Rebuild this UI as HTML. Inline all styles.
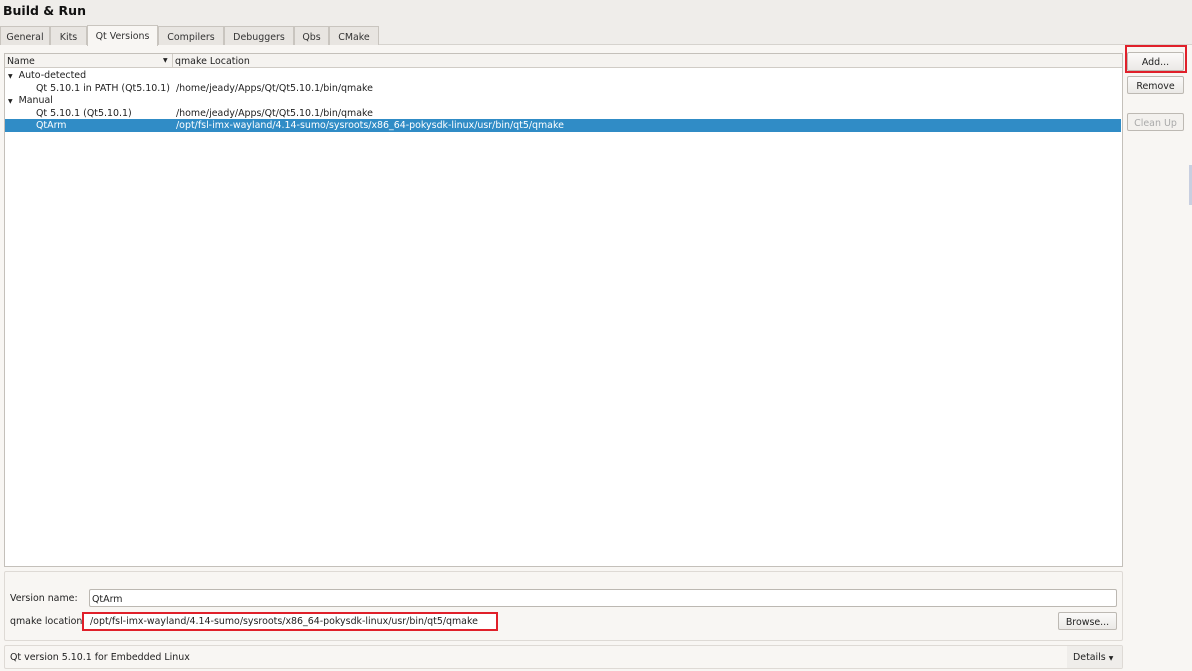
<!DOCTYPE html>
<html><head><style>
*{box-sizing:border-box;margin:0;padding:0}
body{width:1192px;height:671px;background:#f8f6f3;font-family:"DejaVu Sans","Liberation Sans",sans-serif;font-size:9.45px;color:#222;position:relative;overflow:hidden}
.a{position:absolute;white-space:nowrap}
.top{left:0;top:0;width:1192px;height:45px;background:#efedea;border-bottom:1px solid #d6d3ce}
.tab{top:26px;height:19px;border:1px solid #c9c5bf;border-bottom:none;background:#e8e5e1;padding:5px 0 0;text-align:center;color:#333}
.btn{border:1px solid #bdb9b3;border-radius:2px;background:linear-gradient(#fbfaf9,#ebe9e6);text-align:center;color:#222;padding-top:4px}
.row{left:5px;width:1116px;height:12.5px;line-height:13.5px}
.red{border:2px solid #e0202a}
</style></head><body>
<div class="a top"></div>
<div class="a" style="left:3px;top:3px;font-weight:bold;font-size:12.5px;color:#111">Build &amp; Run</div>
<div class="a tab" style="left:0;width:50px">General</div>
<div class="a tab" style="left:50px;width:37px">Kits</div>
<div class="a tab" style="left:87px;width:71px;top:25px;height:21px;background:#f8f6f3;padding-top:5px">Qt Versions</div>
<div class="a tab" style="left:158px;width:66px">Compilers</div>
<div class="a tab" style="left:224px;width:70px">Debuggers</div>
<div class="a tab" style="left:294px;width:35px">Qbs</div>
<div class="a tab" style="left:329px;width:50px">CMake</div>

<div class="a" style="left:4px;top:53px;width:1119px;height:514px;background:#fff;border:1px solid #c4c0ba"></div>
<div class="a" style="left:5px;top:54px;width:1117px;height:14px;background:#f5f3f0;border-bottom:1px solid #d0ccc6"></div>
<div class="a" style="left:172px;top:54px;width:1px;height:14px;background:#d0ccc6"></div>
<div class="a" style="left:7px;top:56px">Name</div>
<div class="a" style="left:163px;top:57px;font-size:6px">▼</div>
<div class="a" style="left:175px;top:56px">qmake Location</div>

<div class="a row" style="top:69px"><span style="font-size:6px;margin:0 6px 0 3px">▼</span>Auto-detected</div>
<div class="a row" style="top:81.5px"><span style="margin-left:31px">Qt 5.10.1 in PATH (Qt5.10.1)</span><span class="a" style="left:171px">/home/jeady/Apps/Qt/Qt5.10.1/bin/qmake</span></div>
<div class="a row" style="top:94px"><span style="font-size:6px;margin:0 6px 0 3px">▼</span>Manual</div>
<div class="a row" style="top:106.5px"><span style="margin-left:31px">Qt 5.10.1 (Qt5.10.1)</span><span class="a" style="left:171px">/home/jeady/Apps/Qt/Qt5.10.1/bin/qmake</span></div>
<div class="a row" style="top:119px;background:#308cc6;color:#fff"><span style="margin-left:31px">QtArm</span><span class="a" style="left:171px">/opt/fsl-imx-wayland/4.14-sumo/sysroots/x86_64-pokysdk-linux/usr/bin/qt5/qmake</span></div>

<div class="a red" style="left:1125px;top:45px;width:62px;height:28px"></div>
<div class="a btn" style="left:1127px;top:52px;width:57px;height:19px">Add...</div>
<div class="a btn" style="left:1127px;top:76px;width:57px;height:18px">Remove</div>
<div class="a btn" style="left:1127px;top:113px;width:57px;height:18px;color:#aaa;background:#f3f1ee">Clean Up</div>
<div class="a" style="left:1189px;top:165px;width:3px;height:40px;background:#c8cfe0"></div>

<div class="a" style="left:4px;top:571px;width:1119px;height:70px;border:1px solid #dedad5;border-radius:2px;background:#f8f6f3"></div>
<div class="a" style="left:10px;top:593px">Version name:</div>
<div class="a" style="left:89px;top:589px;width:1028px;height:18px;background:#fff;border:1px solid #bcb8b2;border-radius:2px;padding:4px 0 0 2px">QtArm</div>
<div class="a" style="left:10px;top:616px">qmake location</div>
<div class="a red" style="left:82px;top:612px;width:416px;height:19px;background:#fff;padding:2px 0 0 6px">/opt/fsl-imx-wayland/4.14-sumo/sysroots/x86_64-pokysdk-linux/usr/bin/qt5/qmake</div>
<div class="a btn" style="left:1058px;top:612px;width:59px;height:18px">Browse...</div>

<div class="a" style="left:4px;top:645px;width:1119px;height:24px;border:1px solid #dedad5;border-radius:2px;background:#f8f6f3"></div>
<div class="a" style="left:10px;top:652px">Qt version 5.10.1 for Embedded Linux</div>
<div class="a" style="left:1067px;top:646px;width:55px;height:22px;background:#efedea;padding:6px 0 0 6px">Details <span style="font-size:6px">▼</span></div>
</body></html>
